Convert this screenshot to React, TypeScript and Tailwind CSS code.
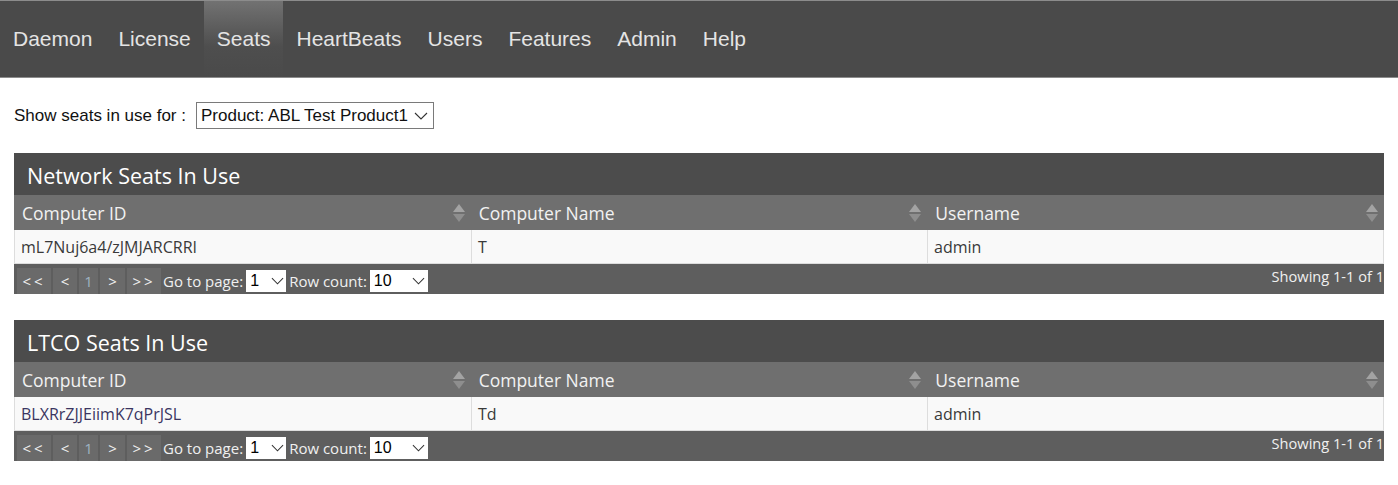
import React from "react";

const navItems = ["Daemon", "License", "Seats", "HeartBeats", "Users", "Features", "Admin", "Help"];

function Chevron({ className = "" }: { className?: string }) {
  return (
    <svg className={className} width="14" height="8" viewBox="0 0 14 8" fill="none">
      <path d="M1 1l6 6 6-6" stroke="#333" strokeWidth="1.1" />
    </svg>
  );
}

function SortIcon() {
  return (
    <svg width="14" height="20" viewBox="0 0 14 20">
      <path d="M7 1 L13 9 L1 9 Z" fill="#a3a3a3" />
      <path d="M1 11 L13 11 L7 19 Z" fill="#8e8e8e" />
    </svg>
  );
}

function Panel({ title, id, name, user, idColor }: { title: string; id: string; name: string; user: string; idColor: string }) {
  const cols = ["Computer ID", "Computer Name", "Username"];
  return (
    <div className="w-[1370px]" style={{ fontFamily: '"Open Sans", sans-serif' }}>
      <div className="flex h-[42px] items-center bg-[#4c4c4c] pl-[13px] pt-[4px] text-[21.5px] text-white">{title}</div>
      <div className="grid h-[35px] grid-cols-3 bg-[#6f6f6f]">
        {cols.map((c) => (
          <div key={c} className="flex items-center justify-between pl-[8px] pr-[5px] pt-[1px] text-[17.5px] text-[#f2f2f2]">
            <span>{c}</span>
            <SortIcon />
          </div>
        ))}
      </div>
      <div className="grid h-[34px] grid-cols-3 border-x border-b border-[#dddddd] bg-[#f9f9f9] text-[16px]">
        <div className="flex items-center pl-[6px]" style={{ color: idColor }}>{id}</div>
        <div className="flex items-center border-l border-[#dddddd] pl-[6px] text-[#3a3a3a]">{name}</div>
        <div className="flex items-center border-l border-[#dddddd] pl-[6px] text-[#3a3a3a]">{user}</div>
      </div>
      <div className="flex h-[30px] justify-between bg-[#5e5e5e] text-[15px] text-[#f0f0f0]">
        <div className="flex items-end gap-[2px] pl-[3px]">
          <div className="flex h-[26px] w-[34px] items-center justify-center bg-[#6a6a6a] text-[15px] tracking-[3px]">&lt;&lt;</div>
          <div className="flex h-[26px] w-[24px] items-center justify-center bg-[#6a6a6a] text-[15px]">&lt;</div>
          <div className="flex h-[26px] w-[19px] items-center justify-center bg-[#6a6a6a] text-[15px] text-[#9fb3c2]">1</div>
          <div className="flex h-[26px] w-[25px] items-center justify-center bg-[#6a6a6a] text-[15px]">&gt;</div>
          <div className="flex h-[26px] w-[34px] items-center justify-center bg-[#6a6a6a] text-[15px] tracking-[3px]">&gt;&gt;</div>
          <div className="flex h-[26px] items-center gap-[3px]">
            <span>Go to page:</span>
            <div className="flex h-[22px] w-[40px] items-center justify-between bg-white pl-[4px] pr-[2px] text-[16px] text-black" style={{ fontFamily: '"Liberation Sans", Arial, sans-serif' }}>
              <span>1</span>
              <Chevron className="w-[13px]" />
            </div>
            <span>Row count:</span>
            <div className="flex h-[22px] w-[58px] items-center justify-between bg-white pl-[4px] pr-[3px] text-[16px] text-black" style={{ fontFamily: '"Liberation Sans", Arial, sans-serif' }}>
              <span>10</span>
              <Chevron className="w-[13px]" />
            </div>
          </div>
        </div>
        <div className="pt-[2px] text-[14.6px]">Showing 1-1 of 1</div>
      </div>
    </div>
  );
}

export default function App() {
  return (
    <div className="h-[485px] w-[1398px] bg-white" style={{ fontFamily: '"Liberation Sans", Arial, sans-serif' }}>
      <nav className="flex h-[78px] border-y border-[#8c8c8c] bg-[#4a4a4a]">
        {navItems.map((n) => (
          <div
            key={n}
            className={
              "flex items-center px-[13px] text-[21px] text-[#e4e4e4] " +
              (n === "Seats" ? "bg-gradient-to-b from-[#727272] via-[#4e4e4e] via-60% to-[#4a4a4a]" : "")
            }
          >
            {n}
          </div>
        ))}
      </nav>
      <div className="px-[14px]">
        <div className="mt-[24px] flex h-[27px] items-center gap-[10px] text-[17px] text-[#111]">
          <span>Show seats in use for :</span>
          <div className="flex h-[27px] w-[238px] items-center justify-between border border-[#7a7a7a] pl-[4px] pr-[5px] text-[17px]">
            <span>Product: ABL Test Product1</span>
            <Chevron />
          </div>
        </div>
        <div className="mt-[24px]">
          <Panel title="Network Seats In Use" id="mL7Nuj6a4/zJMJARCRRI" name="T" user="admin" idColor="#3a3a3a" />
        </div>
        <div className="mt-[26px]">
          <Panel title="LTCO Seats In Use" id="BLXRrZJJEiimK7qPrJSL" name="Td" user="admin" idColor="#3b3561" />
        </div>
      </div>
    </div>
  );
}
